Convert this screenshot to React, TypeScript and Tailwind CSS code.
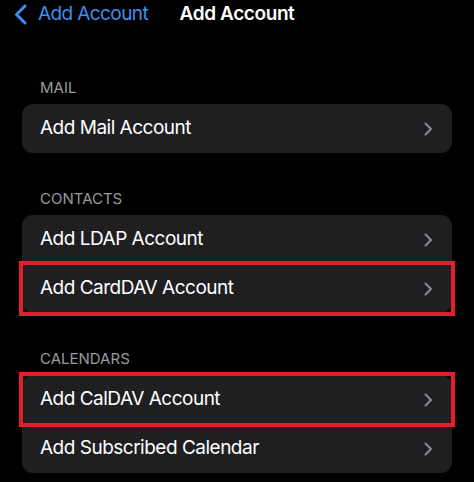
import React from 'react';

type Row = { label: string; marked?: boolean };
type Section = { title: string; rows: Row[] };

const sections: Section[] = [
  { title: 'MAIL', rows: [{ label: 'Add Mail Account' }] },
  {
    title: 'CONTACTS',
    rows: [{ label: 'Add LDAP Account' }, { label: 'Add CardDAV Account', marked: true }],
  },
  {
    title: 'CALENDARS',
    rows: [{ label: 'Add CalDAV Account', marked: true }, { label: 'Add Subscribed Calendar' }],
  },
];

const Chevron = () => (
  <svg width="9" height="14" viewBox="0 0 9 14" fill="none" className="shrink-0">
    <path d="M1.5 1.5 L7 7 L1.5 12.5" stroke="#8a8a8f" strokeWidth="2" strokeLinecap="round" strokeLinejoin="round" />
  </svg>
);

const BackChevron = () => (
  <svg width="13" height="21" viewBox="0 0 13 21" fill="none">
    <path d="M11 2 L2.5 10.5 L11 19" stroke="#3d8ef0" strokeWidth="3" strokeLinecap="round" strokeLinejoin="round" />
  </svg>
);

const App: React.FC = () => {
  return (
    <div
      className="w-[474px] h-[482px] bg-black text-white overflow-hidden"
      style={{ fontFamily: 'Inter, "Noto Sans", sans-serif' }}
    >
      {/* Navigation bar */}
      <div className="grid grid-cols-[1fr_auto_1fr] items-center h-[28px] px-[14px]">
        <div className="flex items-center gap-[11px] text-[#3d8ef0] text-[19px]">
          <BackChevron />
          <span className="tracking-[-0.6px]">Add Account</span>
        </div>
        <div className="text-[19px] font-semibold tracking-[-0.4px]">Add Account</div>
        <div />
      </div>

      <div className="px-[22px] pt-[51px]">
        {sections.map((section, i) => (
          <div key={section.title} className={i > 0 ? 'mt-[37px]' : ''}>
            <div className="pl-[18px] text-[15px] leading-[17px] text-[#9a9a9f] mb-[8px]">{section.title}</div>
            <div className="bg-[#1f1f21] rounded-[11px]">
              {section.rows.map((row) => (
                <div
                  key={row.label}
                  className={
                    'flex items-center justify-between h-[49px] pl-[18px] pr-[19px] ' +
                    (row.marked ? 'outline-[4px] outline-solid outline-offset-[-1px] outline-[#e0202e]' : '')
                  }
                >
                  <span className="text-[19px] tracking-[-0.5px]">{row.label}</span>
                  <Chevron />
                </div>
              ))}
            </div>
          </div>
        ))}
      </div>
    </div>
  );
};

export default App;
